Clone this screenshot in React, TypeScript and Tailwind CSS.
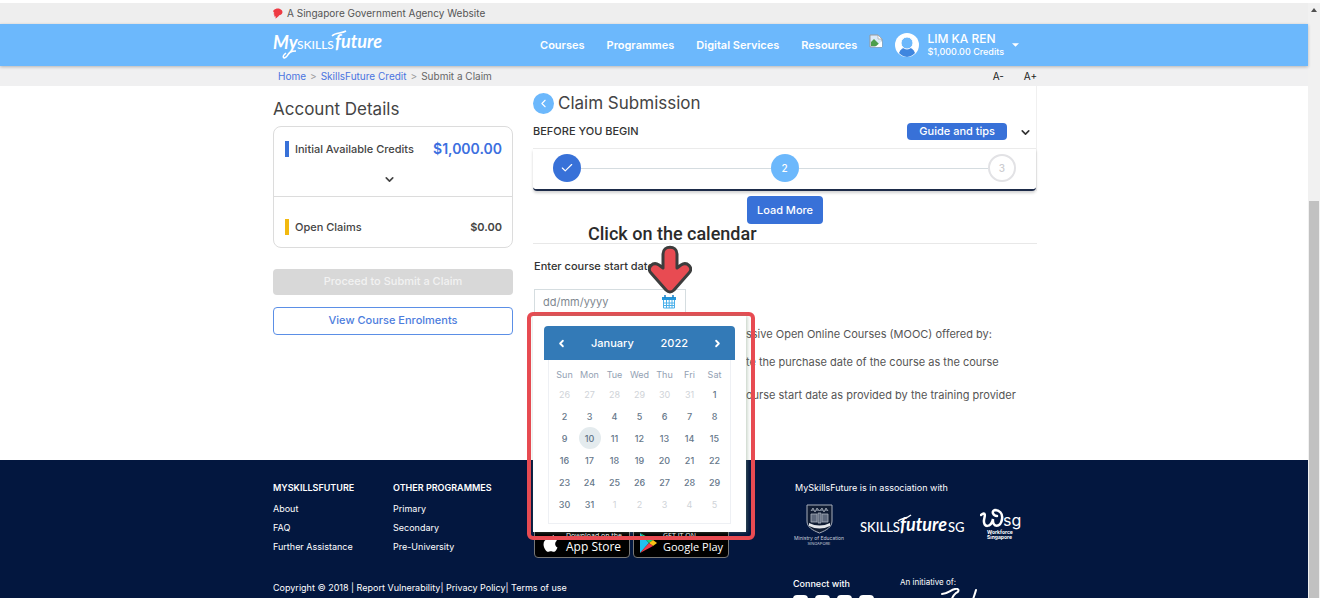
import { useState } from "react";
import { Check, ChevronDown, ChevronLeft, ChevronRight } from "lucide-react";
import { FaApple } from "react-icons/fa";

const NAV = ["Courses", "Programmes", "Digital Services", "Resources"];
const WEEKDAYS = ["Sun", "Mon", "Tue", "Wed", "Thu", "Fri", "Sat"];

// January 2022 starts on a Saturday; six weeks are always shown.
const DAYS = Array.from({ length: 42 }, (_, i) => {
  const day = i - 5;
  if (day < 1) return { day: day + 31, outside: true };
  if (day > 31) return { day: day - 31, outside: true };
  return { day, outside: false };
});

const FOOTER_LINKS = [
  { title: "MYSKILLSFUTURE", links: ["About", "FAQ", "Further Assistance"] },
  { title: "OTHER PROGRAMMES", links: ["Primary", "Secondary", "Pre-University"] },
];

function TopBar() {
  return (
    <div className="mt-[3px] bg-[#eeeeee]">
      <div className="mx-auto flex h-[21px] max-w-[766px] items-center gap-1 pl-0.5 text-[10px] text-[#555]">
        <svg viewBox="0 0 10 11" className="h-[11px] w-[10px]" aria-hidden="true">
          <path
            d="M.5 2.200C2.400.6 5 .2 7 1c1.800.7 2.800 2.200 2.400 3.800C9 6.300 7.600 7 6.200 7.300 5.400 8.600 4 9.800 2.200 10.600c.5-.9.7-1.500.6-2L.8 8.200l.9-1.100L.4 6l1-1L.2 3.800z"
            fill="#ee3a43"
          />
        </svg>
        A Singapore Government Agency Website
      </div>
    </div>
  );
}

function Header() {
  return (
    <header className="relative bg-[#6cb8fc] shadow-[0_1px_3px_rgba(0,0,0,0.25)]">
      <div className="mx-auto flex h-[42px] max-w-[766px] items-center pl-0.5 text-white">
        <a href="#home" aria-label="MySkillsFuture">
          <svg viewBox="0 0 112 34" className="h-[34px] w-28 fill-white">
            <text x="0" y="21" className="font-['Lato'] text-[18px] font-bold italic">My</text>
            <text x="24" y="21" className="font-['Lato'] text-[12px] font-medium">SKILLS</text>
            <text x="62" y="20" className="font-['Lato'] text-[18px] font-bold italic">future</text>
            <path d="M13 25c-5 4-2 7 1 3 2-3 3-5 9-5" fill="none" stroke="white" strokeWidth="1.5" />
            <path d="M59 8c4-4 9-2 14-5" fill="none" stroke="white" strokeWidth="1.5" />
          </svg>
        </a>
        <nav className="ml-auto flex gap-[22px] text-[11px] font-semibold">
          {NAV.map((item) => (
            <a key={item} href="#nav">
              {item}
            </a>
          ))}
        </nav>
        <svg viewBox="0 0 14 14" className="mb-2 ml-3 size-3.5" aria-hidden="true">
          <path d="M1 1h8l4 4v8H1z" fill="#dcebfa" stroke="#9a9a9a" />
          <path d="M2 12V8l3-3 7 7z" fill="#4d9e4c" />
          <path d="M9 1v4h4z" fill="#fff" stroke="#999" strokeWidth=".6" />
          <path d="M6 13 13 7v6z" fill="#fff" />
        </svg>
        <button type="button" className="ml-3 mr-[18px] flex items-center gap-2 text-left">
          <svg viewBox="0 0 24 24" className="size-6" aria-hidden="true">
            <circle cx="12" cy="12" r="12" fill="#fff" />
            <path d="M4 20a8.500 8.500 0 0 1 16 0A12 12 0 0 1 12 24a12 12 0 0 1-8-4z" fill="#3f86df" />
            <circle cx="12" cy="10" r="6" fill="#6cb8fc" stroke="#fff" />
          </svg>
          <span className="leading-[13px]">
            <span className="block text-[12px] font-medium">LIM KA REN</span>
            <span className="block text-[9px] font-medium">$1,000.00 Credits</span>
          </span>
          <svg viewBox="0 0 8 4" className="h-1 w-[7px] fill-white" aria-hidden="true">
            <path d="M0 0h8L4 4z" />
          </svg>
        </button>
      </div>
    </header>
  );
}

function Breadcrumb() {
  return (
    <div className="bg-[#f0f0f1]">
      <div className="mx-auto flex h-5 max-w-[766px] items-center justify-between pl-0.5 text-[10px]">
        <nav className="flex gap-1 pl-[5px] text-[#9a9a9a]" aria-label="Breadcrumb">
          <a href="#home" className="text-[#4a74e0]">Home</a>
          <span>&gt;</span>
          <a href="#credit" className="text-[#4a74e0]">SkillsFuture Credit</a>
          <span>&gt;</span>
          <span className="text-[#666]">Submit a Claim</span>
        </nav>
        <div className="flex gap-5 text-[#222]">
          <button type="button">A-</button>
          <button type="button">A+</button>
        </div>
      </div>
    </div>
  );
}

function AccountDetails() {
  return (
    <aside className="w-60 shrink-0 pt-3">
      <h2 className="text-[17px] leading-[22px] text-[#444]">Account Details</h2>
      <section className="mt-1.5 rounded-lg border border-[#dcdcdc] text-[11px] font-medium text-[#444]">
        <div className="border-b border-[#dcdcdc] pb-2.5 pl-[11px] pr-2.5 pt-3.5">
          <div className="flex h-4 items-center">
            <span className="mr-1.5 h-4 w-1 bg-[#3871d8]" />
            Initial Available Credits
            <strong className="ml-auto text-sm font-semibold text-[#3c6fdf]">$1,000.00</strong>
          </div>
          <button type="button" aria-label="Show credit details" className="mx-auto mt-4 block pr-2">
            <ChevronDown size={13} strokeWidth={3} />
          </button>
        </div>
        <div className="flex items-center pb-[11px] pl-[11px] pr-2.5 pt-[22px]">
          <span className="mr-1.5 h-4 w-1 bg-[#f2b90f]" />
          Open Claims
          <strong className="ml-auto text-[11px] leading-4 font-semibold">$0.00</strong>
        </div>
      </section>
      <button
        type="button"
        disabled
        className="mt-[21px] block h-[26px] w-full rounded bg-[#d8d8d8] text-[11px] font-medium text-[#f2f2f2]"
      >
        Proceed to Submit a Claim
      </button>
      <button
        type="button"
        className="mt-3 block h-7 w-full rounded-sm border border-[#5b8fe6] text-[11px] font-medium text-[#4d7ddd]"
      >
        View Course Enrolments
      </button>
    </aside>
  );
}

function Steps() {
  return (
    <ol className="flex items-center rounded-b border-b-2 border-[#1d2b49] px-5 pb-[7px] pt-[5px] text-[10px] font-medium shadow-[0_2px_3px_rgba(0,0,0,0.18)]">
      <li className="flex size-7 items-center justify-center rounded-full bg-[#3871d8] text-white">
        <Check size={14} aria-label="Step 1 done" />
      </li>
      <li aria-hidden="true" className="h-px flex-1 bg-[#d5dce0]" />
      <li className="flex size-7 items-center justify-center rounded-full bg-[#6cb8fc] text-white">2</li>
      <li aria-hidden="true" className="h-px flex-1 bg-[#d5dce0]" />
      <li className="flex size-7 items-center justify-center rounded-full border-2 border-[#e2e2e5] text-[#ccccd0]">
        3
      </li>
    </ol>
  );
}

function Calendar({ selected, onSelect }: { selected: number; onSelect: (day: number) => void }) {
  return (
    <div className="h-[216px] w-[213px] bg-white px-[11px] pt-2.5 shadow-[1px_0_4px_rgba(120,150,120,0.5)]">
      <div className="flex h-[34px] items-center rounded-t-sm bg-[#337ab7] px-3 text-[11px] font-medium text-white">
        <button type="button" aria-label="Previous month">
          <ChevronLeft size={11} strokeWidth={4} />
        </button>
        <button type="button" className="ml-6">January</button>
        <button type="button" className="ml-auto">2022</button>
        <button type="button" aria-label="Next month" className="ml-6">
          <ChevronRight size={11} strokeWidth={4} />
        </button>
      </div>
      <div className="mx-1 grid grid-cols-7 border border-t-0 border-[#eef0f4] px-[3px] pb-2 pt-2 text-center text-[9px]">
        {WEEKDAYS.map((d) => (
          <span key={d} className="h-[15px] leading-[14px] text-[#93a1b3]">
            {d}
          </span>
        ))}
        {DAYS.map(({ day, outside }, i) => (
          <button
            key={i}
            type="button"
            disabled={outside}
            onClick={() => onSelect(day)}
            className={
              outside
                ? "mx-auto size-[22px] text-[#cfd3d8]"
                : day === selected
                  ? "mx-auto size-[22px] rounded-full bg-[#e4ebee] font-medium text-[#5f7388]"
                  : "mx-auto size-[22px] font-medium text-[#66778a]"
            }
          >
            {day}
          </button>
        ))}
      </div>
    </div>
  );
}

function CalendarIcon() {
  return (
    <svg viewBox="0 0 14 14" className="size-3.5" aria-hidden="true">
      <path d="M0 2h14v3H0z" fill="#2497dc" />
      <path d="M3 0v3M11 0v3" stroke="#1c80c4" strokeWidth="1.5" />
      <path d="M1.500 5v8h11V5M1.500 8h11M1.500 10.500h11M4.500 5v8M7.200 5v8M10 5v8" fill="none" stroke="#4ab0ea" />
    </svg>
  );
}

function DateField() {
  const [selected, setSelected] = useState(10);

  return (
    <div className="relative ml-px mt-[15px] w-[152px]">
      <div className="flex h-[26px] items-center border border-[#d5dde0] pl-2 pr-[9px]">
        <input
          id="start-date"
          placeholder="dd/mm/yyyy"
          className="w-full min-w-0 text-[11px] text-[#555] outline-none placeholder:text-[#808890]"
        />
        <button type="button" aria-label="Open calendar">
          <CalendarIcon />
        </button>
      </div>

      <div className="absolute -left-[7px] top-[23px] z-10 h-[228px] w-[228px] rounded-md border-4 border-[#e84b52] pl-0.5">
        <Calendar selected={selected} onSelect={setSelected} />
      </div>

      {/* Tutorial callout pointing at the calendar button. */}
      <p className="absolute -top-[65px] left-[54px] whitespace-nowrap font-['Roboto'] text-lg leading-5 font-medium text-[#2b2b2b]">
        Click on the calendar
      </p>
      <svg viewBox="0 0 44 50" className="absolute -top-11 left-[114px] z-20 h-[50px] w-11" aria-hidden="true">
        <path
          d="M15 9c0-9 14-9 14 0v14l4-3c6-4 13 3 8 8L26 45q-4 4-8 0L3 28c-5-5 2-12 8-8l4 3z"
          fill="#e84b52"
          stroke="#3d3d3d"
          strokeWidth="3"
          strokeLinejoin="round"
        />
      </svg>
    </div>
  );
}

function ClaimForm() {
  return (
    <main className="min-w-0 flex-1">
      <section className="border-r border-[#f0f0f0] pt-1.5">
        <div className="flex h-[22px] items-center gap-1">
          <button
            type="button"
            aria-label="Back"
            className="flex size-[21px] items-center justify-center rounded-full bg-[#6cb8fc] text-white"
          >
            <ChevronLeft size={13} />
          </button>
          <h1 className="text-[17px] leading-6 text-[#444]">Claim Submission</h1>
        </div>
        <div className="mt-2 flex h-[27px] items-start border-b border-[#ececec] pr-1">
          <h2 className="text-[11px] leading-[18px] font-medium text-[#333]">BEFORE YOU BEGIN</h2>
          <button
            type="button"
            className="ml-auto mt-px h-[17px] rounded-sm bg-[#3871d8] px-3 text-[11px] leading-[17px] font-medium text-white"
          >
            Guide and tips
          </button>
          <button type="button" aria-label="Expand" className="ml-3 mt-1 text-[#333]">
            <ChevronDown size={13} strokeWidth={3} />
          </button>
        </div>
        <Steps />
      </section>
      <div className="mt-[5px] border-b border-[#e8e8e8] pb-[19px] text-center">
        <button type="button" className="h-7 rounded-sm bg-[#3871d8] px-2.5 text-[11px] font-medium text-white">
          Load More
        </button>
      </div>
      <label htmlFor="start-date" className="ml-px mt-3.5 block text-[11px] leading-4 font-medium text-[#333]">
        Enter course start date
      </label>
      <DateField />
      <div className="pb-[57px] pl-[213px] pt-[11px] text-[11px] leading-4 whitespace-nowrap text-[#555]">
        <p>ssive Open Online Courses (MOOC) offered by:</p>
        <p className="mt-3">te the purchase date of the course as the course</p>
        <p className="mt-[17px]">ourse start date as provided by the training provider</p>
      </div>
    </main>
  );
}

function StoreBadges() {
  return (
    <div className="flex gap-[3px] pt-[46px]">
      <a
        href="#app-store"
        className="flex h-[30px] w-24 items-center gap-1.5 rounded border border-[#777] bg-black pl-1.5 font-['Open_Sans']"
      >
        <FaApple size={19} />
        <span className="whitespace-nowrap">
          <span className="block text-[7px] leading-2">Download on the</span>
          <span className="block text-[12px] leading-[14px] font-medium">App Store</span>
        </span>
      </a>
      <a
        href="#google-play"
        className="flex h-[30px] w-24 items-center gap-1.5 rounded border border-[#777] bg-black pl-1.5 font-['Open_Sans']"
      >
        <svg viewBox="0 0 17 20" className="h-5 w-[17px] shrink-0" aria-hidden="true">
          <path d="M0 0v20l9-10z" fill="#22c1ee" />
          <path d="M0 0l13 7-4 3z" fill="#18d47b" />
          <path d="M13 7l4 3-4 3-4-3z" fill="#fbc316" />
          <path d="M0 20l9-10 4 3z" fill="#f13b48" />
        </svg>
        <span className="whitespace-nowrap">
          <span className="block text-[7px] leading-2">GET IT ON</span>
          <span className="block text-[11px] leading-[14px] font-medium">Google Play</span>
        </span>
      </a>
    </div>
  );
}

function PartnerLogos() {
  return (
    <div className="flex items-start">
      <svg viewBox="0 0 52 42" className="h-[42px] w-[52px] shrink-0" role="img" aria-label="Ministry of Education">
        <path d="M14 1h25v16c0 6-5 9-12.500 12C19 26 14 23 14 17z" fill="#101c33" stroke="#a8afbc" />
        <path
          d="M18 7l2-3 2 4 2-4 2.500 3L29 4l2 4 2-4 2 3M18 10h6v8h-6zM29 10h6v8h-6zM25 9h3v10h-3z"
          fill="#5d687c"
          stroke="#aab1bd"
          strokeWidth=".8"
        />
        <path d="M16 19q10.500 5 21 0v3q-10.500 5-21 0z" fill="#e4e6ea" />
        <text x="26" y="36" textAnchor="middle" className="fill-[#c9cedb] text-[5px]">Ministry of Education</text>
        <text x="26" y="41" textAnchor="middle" className="fill-[#c9cedb] text-[4px]">SINGAPORE</text>
      </svg>
      <svg
        viewBox="0 0 106 30"
        className="ml-[15px] mt-2 h-[30px] w-[106px] fill-white"
        role="img"
        aria-label="SkillsFuture SG"
      >
        <text x="0" y="20" className="font-['Lato'] text-[13px] font-medium">SKILLS</text>
        <text x="40" y="19" className="font-['Lato'] text-[18px] font-bold italic">future</text>
        <text x="88" y="20" className="font-['Lato'] text-[13px] font-medium">SG</text>
        <path d="M38 9c4-3 8-2 13-6" fill="none" stroke="white" strokeWidth="1.5" />
      </svg>
      <svg
        viewBox="0 0 42 34"
        className="ml-3.5 mt-1 h-[34px] w-[42px] fill-white"
        role="img"
        aria-label="Workforce Singapore"
      >
        <path
          d="M1 7c5-4 4 1 3 5-1 8 7 8 9-1-1 9 8 9 9 0 1-6-3-9-7-9-4 1-2 6 2 6"
          fill="none"
          stroke="white"
          strokeWidth="2.5"
          strokeLinecap="round"
        />
        <text x="23" y="18" className="text-[16px]">sg</text>
        <text x="7" y="26" className="text-[5px] font-bold">Workforce</text>
        <text x="7" y="31" className="text-[5px] font-bold">Singapore</text>
      </svg>
    </div>
  );
}

function Footer() {
  return (
    <footer className="flex-1 bg-[#03173f] text-[9px] text-white">
      <div className="mx-auto grid max-w-[766px] grid-cols-[120px_141px_1fr_244px] pl-0.5 pt-[22px]">
        {FOOTER_LINKS.map((col) => (
          <section key={col.title} className="whitespace-nowrap">
            <h3 className="leading-3 font-semibold">{col.title}</h3>
            <ul className="mt-[9px] flex flex-col gap-[7px] leading-3">
              {col.links.map((link) => (
                <li key={link}>
                  <a href="#footer">{link}</a>
                </li>
              ))}
            </ul>
          </section>
        ))}
        <StoreBadges />
        <section>
          <h3 className="mb-2.5 pl-0.5 leading-3">MySkillsFuture is in association with</h3>
          <PartnerLogos />
        </section>
      </div>
      <div className="mx-auto mt-[18px] flex max-w-[766px] items-start pl-0.5">
        <p className="pt-1.5 leading-3 whitespace-nowrap">
          Copyright © 2018 | <a href="#report">Report Vulnerability</a>| <a href="#privacy">Privacy Policy</a>|{" "}
          <a href="#terms">Terms of use</a>
        </p>
        <section className="ml-auto w-[107px] pt-0.5">
          <h3 className="leading-3 font-medium">Connect with</h3>
          <div className="mt-[5px] flex gap-[7px]">
            {["Facebook", "Instagram", "YouTube", "Telegram"].map((name) => (
              <a key={name} href="#social" aria-label={name} className="size-[15px] rounded-sm bg-white" />
            ))}
          </div>
        </section>
        <section className="w-[137px]">
          <h3 className="text-[8px] leading-3">An initiative of:</h3>
          {/* Script wordmark; only its tall strokes clear the fold. */}
          <svg viewBox="0 0 100 30" className="h-[30px] w-[100px]" aria-hidden="true">
            <path
              d="M42 6c6 0 8-4 13-5 5-1 4 3 1 4-4 3-6 9-8 18M76 2c-1 4-3 8-4 14"
              fill="none"
              stroke="white"
              strokeWidth="2"
              strokeLinecap="round"
            />
          </svg>
        </section>
      </div>
    </footer>
  );
}

export default function App() {
  return (
    <div className="flex h-screen overflow-hidden bg-white font-['Inter',sans-serif]">
      <div className="flex min-w-0 flex-1 flex-col">
        <TopBar />
        <Header />
        <Breadcrumb />
        <div className="mx-auto flex w-full max-w-[766px] gap-5 pl-0.5">
          <AccountDetails />
          <ClaimForm />
        </div>
        <Footer />
      </div>
      <div className="mt-[3px] flex w-3 flex-col bg-[#f1f1f1]" aria-hidden="true">
        <svg viewBox="0 0 6 4" className="mx-auto mt-[5px] h-1 w-1.5 fill-[#505050]">
          <path d="M3 0l3 4H0z" />
        </svg>
        <div className="mx-px mt-auto h-2/3 bg-[#c1c1c1]" />
      </div>
    </div>
  );
}
